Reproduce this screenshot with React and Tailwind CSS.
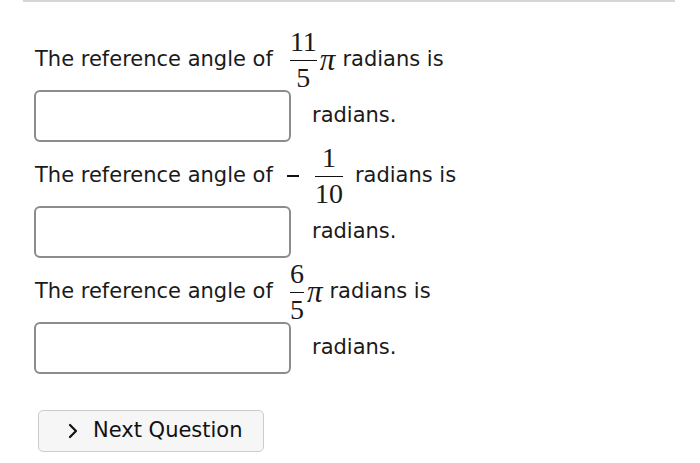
function Frac({ num, den }) {
  return (
    <span className="inline-flex flex-col items-center px-[2px] font-['Liberation_Serif',serif] text-[28px] leading-[26px]">
      <span className="pb-[5px]">{num}</span>
      <span className="block h-[1.5px] w-full bg-[#111]"></span>
      <span className="pt-[4px]">{den}</span>
    </span>
  );
}

function Pi() {
  return <span className="ml-[1px] font-['Liberation_Serif',serif] text-[31px] leading-[28px] italic">π</span>;
}

function Answer() {
  return (
    <div className="flex h-[52px] items-center">
      <div className="h-[52px] w-[257px] rounded-[6px] border-2 border-[#8c8c8c] bg-white"></div>
      <span className="ml-[21px]">radians.</span>
    </div>
  );
}

export default function App() {
  return (
    <div className="h-[463px] w-[700px] bg-white font-['DejaVu_Sans',sans-serif] text-[21px] text-[#1a1a1a]">
      <div className="mx-[23px] h-[2px] w-[652px] bg-[#d6d6d6]"></div>
      <div className="pl-[34px] pt-[24px]">
        <div className="flex h-[64px] items-center pt-[4px]">
          <span className="ml-[1px]">The reference angle of</span>
          <span className="ml-[15px]">
            <Frac num="11" den="5" />
          </span>
          <Pi />
          <span className="ml-[7px]">radians is</span>
        </div>
        <Answer />

        <div className="flex h-[64px] items-center pt-[4px]">
          <span className="ml-[1px]">The reference angle of</span>
          <span className="ml-[14px] block h-[1.5px] w-[12px] bg-[#111]"></span>
          <span className="ml-[14px]">
            <Frac num="1" den="10" />
          </span>
          <span className="ml-[10px]">radians is</span>
        </div>
        <Answer />

        <div className="flex h-[64px] items-center pt-[4px]">
          <span className="ml-[1px]">The reference angle of</span>
          <span className="ml-[15px]">
            <Frac num="6" den="5" />
          </span>
          <Pi />
          <span className="ml-[7px]">radians is</span>
        </div>
        <Answer />

        <div className="mt-[36px] pl-[4px]">
          <button className="flex h-[42px] w-[226px] items-center rounded-[5px] border border-[#cccccc] bg-[#f6f6f6] pl-[29px] text-[21px] text-[#111]">
            <svg width="11" height="16" viewBox="0 0 11 16" className="shrink-0">
              <polyline points="2,2 8,8 2,14" fill="none" stroke="#111" strokeWidth="2.2" strokeLinecap="round" strokeLinejoin="round" />
            </svg>
            <span className="ml-[14px]">Next Question</span>
          </button>
        </div>
      </div>
    </div>
  );
}
